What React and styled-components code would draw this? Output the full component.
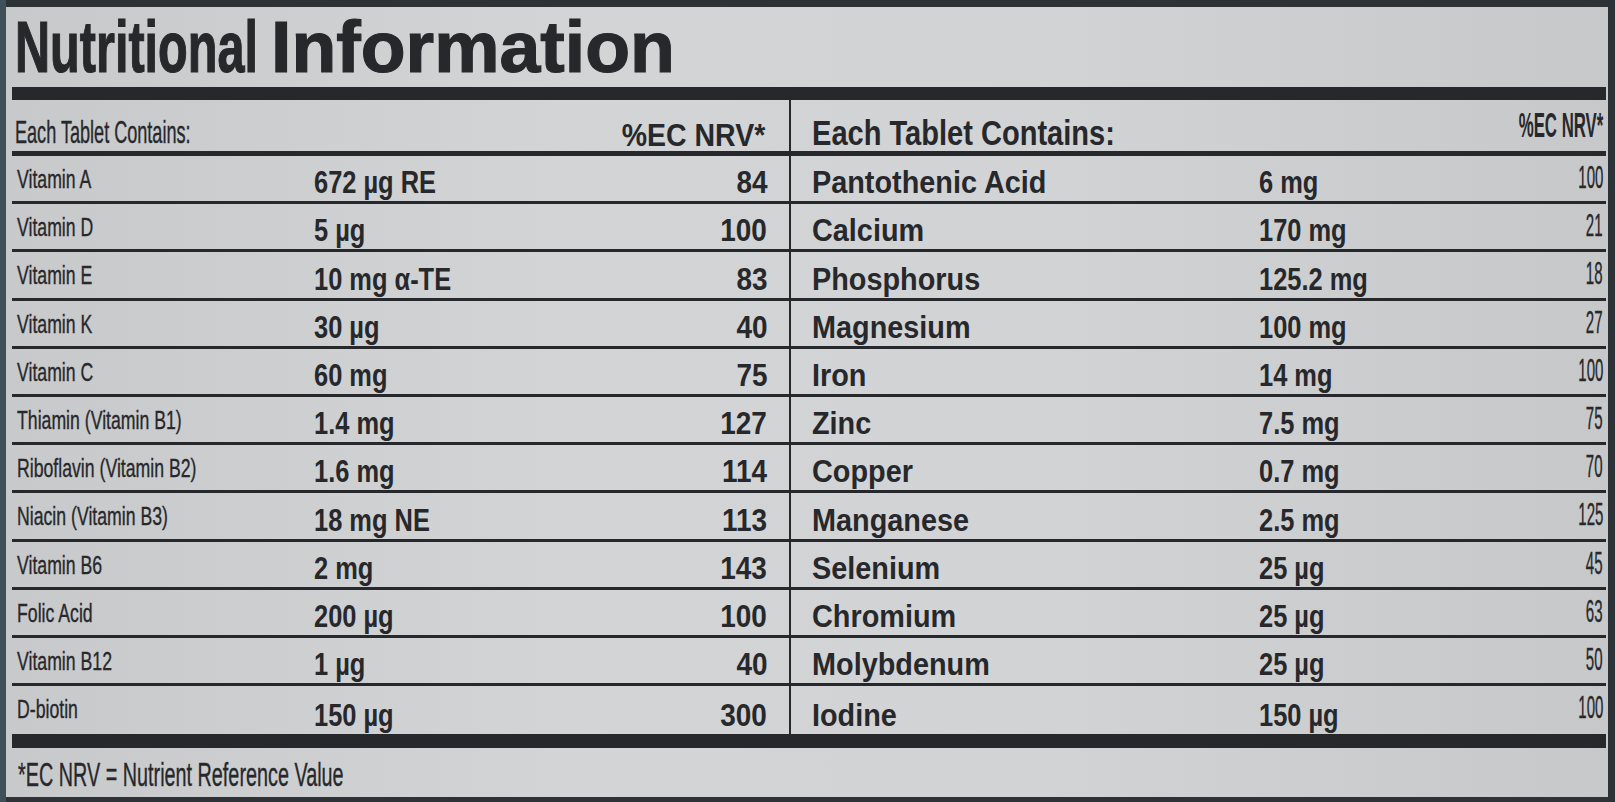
import React from 'react'
import styled, { createGlobalStyle } from 'styled-components'

const left = [
  ['Vitamin A', '672 µg RE', '84'],
  ['Vitamin D', '5 µg', '100'],
  ['Vitamin E', '10 mg α-TE', '83'],
  ['Vitamin K', '30 µg', '40'],
  ['Vitamin C', '60 mg', '75'],
  ['Thiamin (Vitamin B1)', '1.4 mg', '127'],
  ['Riboflavin (Vitamin B2)', '1.6 mg', '114'],
  ['Niacin (Vitamin B3)', '18 mg NE', '113'],
  ['Vitamin B6', '2 mg', '143'],
  ['Folic Acid', '200 µg', '100'],
  ['Vitamin B12', '1 µg', '40'],
  ['D-biotin', '150 µg', '300'],
]

const right = [
  ['Pantothenic Acid', '6 mg', '100'],
  ['Calcium', '170 mg', '21'],
  ['Phosphorus', '125.2 mg', '18'],
  ['Magnesium', '100 mg', '27'],
  ['Iron', '14 mg', '100'],
  ['Zinc', '7.5 mg', '75'],
  ['Copper', '0.7 mg', '70'],
  ['Manganese', '2.5 mg', '125'],
  ['Selenium', '25 µg', '45'],
  ['Chromium', '25 µg', '63'],
  ['Molybdenum', '25 µg', '50'],
  ['Iodine', '150 µg', '100'],
]

const ink = '#27282b'
const sans = `"Liberation Sans", Arial, sans-serif`
const ROW = 48.2

const Global = createGlobalStyle`
  html, body { margin: 0; padding: 0; }
  body {
    background: #2f3639;
    font-family: ${sans};
    color: ${ink};
  }
`

const Frame = styled.div`
  width: 1615px;
  height: 802px;
  box-sizing: border-box;
  padding: 7px 7px 5px 6px;
  background: linear-gradient(90deg, #3e5159 0, #3e5159 6px, #2c3235 6px);
`

const Label = styled.div`
  height: 100%;
  display: flex;
  flex-direction: column;
  background: linear-gradient(90deg, #c7c9cb 0%, #d3d4d5 35%, #d2d3d4 65%, #c6c8ca 100%);
`

const Title = styled.h1`
  display: flex;
  gap: 12px;
  margin: 0;
  padding: 4px 0 4px 9px;
  font-family: ${sans};
  font-weight: 700;
  font-size: 72px;
  line-height: 72px;
  color: ${ink};
  -webkit-text-stroke: 1.2px ${ink};
`

const Word = styled.span`
  display: inline-block;
  width: ${p => p.$w}px;
  white-space: nowrap;
  transform: scaleX(${p => p.$sx});
  transform-origin: left center;
`

const Rule = styled.div`
  height: ${p => p.$h}px;
  margin: 0 2px 0 6px;
  background: ${ink};
`

const Table = styled.div`
  display: flex;
  margin-left: 6px;
  margin-right: 2px;
`

const Panel = styled.div`
  display: flex;
  flex-direction: column;
  width: ${p => (p.$w ? `${p.$w}px` : 'auto')};
  flex: ${p => (p.$w ? 'none' : 1)};
  border-right: ${p => (p.$divider ? `2.5px solid ${ink}` : 'none')};
`

const Row = styled.div`
  display: grid;
  grid-template-columns: ${p => p.$cols} 1fr auto;
  height: ${p => p.$h || ROW}px;
  box-sizing: border-box;
  padding: ${p => p.$pad};
  border-bottom: ${p => (p.$last ? 'none' : `${p.$line || 3}px solid ${ink}`)};
`

// condensed label type: the print face is a narrow grotesque, so squeeze Liberation Sans
const Text = styled.span`
  display: inline-block;
  align-self: ${p => p.$align || 'end'};
  justify-self: ${p => (p.$end ? 'end' : 'start')};
  font-size: ${p => p.$size || 31}px;
  line-height: 1;
  font-weight: ${p => (p.$light ? 400 : 700)};
  transform: scaleX(${p => p.$sx || 0.93});
  transform-origin: ${p => (p.$end ? 'right' : 'left')} center;
  white-space: nowrap;
  padding-top: ${p => p.$pt || 0}px;
  padding-bottom: ${p => p.$pb ?? 3}px;
  -webkit-text-stroke: ${p => p.$stroke || 0}px ${ink};
`

const Footer = styled.div`
  padding: 10px 0 0 12px;
`

const Name = props => <Text $light $size={26} $sx={0.68} $stroke={0.35} $align="start" $pt={10} $pb={0} {...props} />
const Amount = props => <Text $sx={0.82} {...props} />
const Nrv = props => <Text $light $size={32} $sx={0.47} $stroke={0.35} $align="start" $pt={5} $pb={0} $end {...props} />

const LeftTable = () => (
  <Panel $w={777} $divider>
    <Row $cols="297px" $pad="0 24px 0 3px" $h={56} $line={5}>
      <Text $light $size={32} $sx={0.565} $stroke={0.35} $pb={3}>Each Tablet Contains:</Text>
      <span />
      <Text $end $size={32} $sx={0.89} $pb={0}>%EC NRV*</Text>
    </Row>
    {left.map(([name, amount, nrv], i) => (
      <Row key={name} $cols="297px" $pad="0 22px 0 5px" $last={i === left.length - 1}>
        <Name>{name}</Name>
        <Amount>{amount}</Amount>
        <Text $end $sx={0.9}>{nrv}</Text>
      </Row>
    ))}
  </Panel>
)

const RightTable = () => (
  <Panel>
    <Row $cols="447px" $pad="0 3px 0 21px" $h={56} $line={5}>
      <Text $size={35} $sx={0.83} $pb={1}>Each Tablet Contains:</Text>
      <span />
      <Text $size={35} $sx={0.48} $align="start" $pt={7} $pb={0} $end>%EC NRV*</Text>
    </Row>
    {right.map(([name, amount, nrv], i) => (
      <Row key={name} $cols="447px" $pad="0 3px 0 21px" $last={i === right.length - 1}>
        <Text>{name}</Text>
        <Amount>{amount}</Amount>
        <Nrv>{nrv}</Nrv>
      </Row>
    ))}
  </Panel>
)

export default function App() {
  return (
    <>
      <Global />
      <Frame>
        <Label>
          <Title>
            <Word $w={244} $sx={0.675}>Nutritional</Word>
            <Word $w={410} $sx={1.02}>Information</Word>
          </Title>
          <Rule $h={13} />
          <Table>
            <LeftTable />
            <RightTable />
          </Table>
          <Rule $h={14} />
          <Footer>
            <Text $light $size={33} $sx={0.6} $stroke={0.35} $pb={0}>*EC NRV = Nutrient Reference Value</Text>
          </Footer>
        </Label>
      </Frame>
    </>
  )
}
